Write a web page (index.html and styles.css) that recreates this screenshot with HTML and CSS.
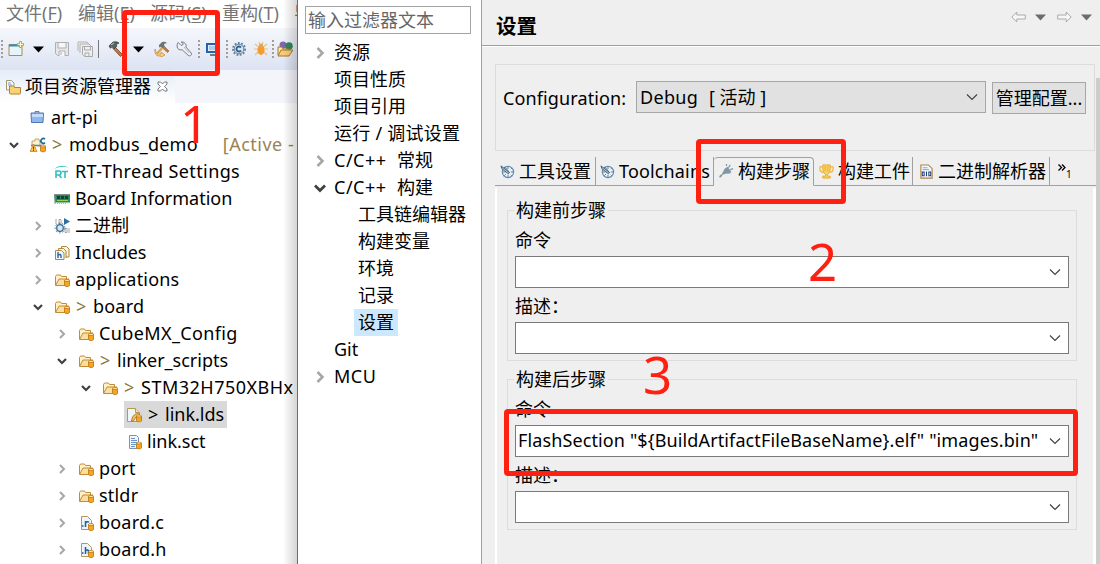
FILE: index.html
```html
<!DOCTYPE html>
<html lang="zh-CN">
<head>
<meta charset="utf-8">
<title>设置</title>
<link rel="stylesheet" href="styles.css">
</head>
<body>
<svg class="defs" aria-hidden="true">
  <symbol id="right" viewBox="0 0 16 16"><path d="M6 4l4 4-4 4" fill="none" stroke="#a6a6a6" stroke-width="2"/></symbol>
  <symbol id="down" viewBox="0 0 16 16"><path d="M4 6l4 4 4-4" fill="none" stroke="#404040" stroke-width="2.2"/></symbol>
  <symbol id="chev" viewBox="0 0 12 8"><path d="M1 1.5l5 5 5-5" fill="none" stroke="#444" stroke-width="1.2"/></symbol>
  <symbol id="tri" viewBox="0 0 11 7"><path d="M0 .5h11L5.500 6.500z" fill="currentColor"/></symbol>
  <symbol id="db" viewBox="0 0 6 8"><path d="M.5 1.500v5c0 1.300 5 1.300 5 0v-5" fill="#f6a623" stroke="#b9720d" stroke-width=".8"/><ellipse cx="3" cy="1.500" rx="2.500" ry="1.100" fill="#ffe39a" stroke="#b9720d" stroke-width=".7"/></symbol>
  <symbol id="folder" viewBox="0 0 16 16"><path d="M1.500 13V4.500l1-1.500h4l1 1.500h5V7" fill="#fff2c6" stroke="#c58a35"/><path d="M1.500 13.500L5 7h10l-3 6.500z" fill="#fbdfa0" stroke="#c58a35"/><use href="#db" x="10" y="7" width="6" height="8"/></symbol>
  <symbol id="proj" viewBox="0 0 16 16"><path d="M5 3V1.500h4V3" fill="#e8e6ee" stroke="#7b7997"/><path d="M1 3h12.500l-.5 9.500H1.500z" fill="#8fb9ee" stroke="#5474b3"/><path d="M2 4h11v3H2z" fill="#c3dcfa"/></symbol>
  <symbol id="cproj" viewBox="0 0 16 16"><path d="M2 8V4h3V2h4v2h1v5z" fill="#fff1cc" stroke="#c9a368"/><path d="M1 8.500h13" stroke="#5a82ba" stroke-width="1.500"/><path d="M15 2.200a2.400 2.400 0 1 0 0 3.500" fill="none" stroke="#176c9d" stroke-width="1.700"/><path d="M3.500 7L7 14.500H0z" fill="#ffc247" stroke="#d18513" stroke-width=".8"/><path d="M3.500 9.500v3M3.500 13v1" stroke="#6d4812"/><use href="#db" x="10" y="7.500" width="6" height="8"/></symbol>
  <symbol id="rt" viewBox="0 0 16 16"><path d="M0 5Q7-1 15 4Q8 1 0 5" fill="#35c5c6"/><path d="M2 14V7h3q2 0 2 2t-2 2H2M5 11l2.500 3M8 7.500h6M11 7.500V14" fill="none" stroke="#35bdbf" stroke-width="1.600"/></symbol>
  <symbol id="board" viewBox="0 0 16 16"><path d="M0 3.500h16v8H1z" fill="#26895a"/><path d="M0 3.500h16M1 3v10" stroke="#858f8b"/><path d="M3 5h3v3H3zm4 0h3v3H7zm4 0h3v3h-3z" fill="#173f33"/><path d="M3 9h11v1H3z" fill="#9dce55"/><path d="M3 12.500h9" stroke="#d5b13a" stroke-dasharray="1 1"/></symbol>
  <symbol id="bin" viewBox="0 0 16 16"><path d="M2 1v5M5 1.500h2v4H5zM11 10.500h2v4h-2zM15 10v5" fill="none" stroke="#a4a4a4"/><path d="M10 0l6 3.500L10 7z" fill="#2c6fa0"/><circle cx="6" cy="10" r="3.300" fill="#d8e8f2" stroke="#376b91" stroke-width="1.300"/><circle cx="6" cy="10" r="4.900" fill="none" stroke="#376b91" stroke-dasharray="1.500 2"/></symbol>
  <symbol id="inc" viewBox="0 0 16 16"><path d="M7.500 10V1.500h5L15 4v8h-3" fill="#fff7d9" stroke="#ad8740"/><path d="M4.500 10V3.500h5L12 6v7" fill="#fff7d9" stroke="#ad8740"/><path d="M1.500 5.500h6L10 8v6.500H1.500z" fill="#f2f6ff" stroke="#ad8740"/><path d="M4 7v6M4 10q3-1.500 3 1v2" fill="none" stroke="#28689d" stroke-width="1.400"/></symbol>
  <symbol id="lds" viewBox="0 0 16 16"><path d="M1.500 1.500h8l4 4v9h-12z" fill="#edf4fc" stroke="#b89953"/><path d="M9.500 1.500v4h4" fill="#f9e3a6" stroke="#b89953"/><path d="M5.500 14q0-5 4-7 2-1 4 0v1q-4 1-6 6z" fill="#f0bd62" stroke="#a96a18" stroke-width=".8"/><use href="#db" x="10" y="7.500" width="6" height="8"/></symbol>
  <symbol id="sct" viewBox="0 0 16 16"><path d="M3.500 1.500h7l2 2v11h-9z" fill="#f0f5ff" stroke="#8491a8"/><path d="M5 4.500h4M5 6.500h6M5 8.500h6M5 10.500h5M5 12.500h4" stroke="#6a93cc"/><use href="#db" x="10" y="7.500" width="6" height="8"/></symbol>
  <symbol id="cfile" viewBox="0 0 16 16"><path d="M3.500 1.500h6l4 4v9h-10z" fill="#eef4fd" stroke="#ad985d"/><path d="M4 11h1.500M7.500 6v6M7.500 8q1.500-1.800 3.500-.8" fill="none" stroke="#245b91" stroke-width="1.500"/><use href="#db" x="10" y="8" width="6" height="8"/></symbol>
  <symbol id="hfile" viewBox="0 0 16 16"><path d="M3.500 1.500h6l4 4v9h-10z" fill="#eef4fd" stroke="#ad985d"/><path d="M4 11h1.500M7.500 5v7M7.500 8.500q3-1.500 3 1V12" fill="none" stroke="#245b91" stroke-width="1.500"/><use href="#db" x="10" y="8" width="6" height="8"/></symbol>
  <symbol id="hammer" viewBox="0 0 16 16"><path d="M6.500 5.500l8 8-2 2-7.500-8z" fill="#bd7a45" stroke="#704223" stroke-width=".8"/><path d="M1 5l4-4q4-1 6 1L8 3.500l1 1.800-3 2.500-2-2-1.500 1.500z" fill="#596461" stroke="#303a38" stroke-width=".7"/><path d="M3 4l3-2" stroke="#bfc9c6"/></symbol>
  <symbol id="hammer2" viewBox="0 0 16 16"><path d="M1 8q1 6 6 5v-2l4 3-4 2v-1Q0 16 1 8" fill="#f9d57a" stroke="#c7923f" stroke-width=".8"/><path d="M10 5l5 5-1.500 1.500L8.500 7z" fill="#bd7a45" stroke="#915d34" stroke-width=".6"/><path d="M5 4l3-3q3-1 5 1l-3 1 .5 2L8 7.500 6 5.500 5 7z" fill="#687675"/><path d="M7.500 6L2 12l1.500 1.500L9 8z" fill="#d9a457"/></symbol>
  <symbol id="wrench" viewBox="0 0 16 16"><path d="M2 1l3 3 1.500-.5L7 2 5 .5q3-.5 4.500 2 .8 1.500.2 3l5.300 6q1 1.500-.5 2.500-1 1-2.500-.2L6 8.300Q2 9 1 5.500.3 3 2 1z" transform="translate(.2 .5)" fill="#f1f1f3" stroke="#777b87"/><path d="M8 6l5 6" stroke="#b5b7be"/></symbol>
  <symbol id="gauge" viewBox="0 0 16 16"><circle cx="8.500" cy="8.500" r="6" fill="#edf5fa" stroke="#6d8fae" stroke-width="1.300"/><path d="M8.500 2.500v3M8.500 11.500v3M3 8.500h3M11.500 8.500h3M4.500 12.500l2-2M11.500 5.500l1-1M11.500 11.500l1 1" stroke="#52789c"/><path d="M1 2l9 7-1 1.500L2 5zM5 3l5 6" fill="#bdcbd5" stroke="#3c5d78"/></symbol>
</svg>

<div class="window">
  <section class="ide">
    <nav class="menu"><span>文件(<u>F</u>)</span><span>编辑(<u>E</u>)</span><span>源码(<u>S</u>)</span><span>重构(<u>T</u>)</span><span>导</span></nav>
    <div class="toolbar">
      <i class="dots"></i>
      <svg viewBox="0 0 16 16"><path d="M1 3.500h13v11H1z" fill="#e7f4fc" stroke="#a88f47"/><path d="M1 4.500h11" stroke="#338bc1" stroke-width="2"/><path d="M12.500 0v7M9 3.500h7" stroke="#c9a32b" stroke-width="2.500"/><path d="M12.500 1v5M10 3.500h5" stroke="#fff6bd"/></svg>
      <svg class="caret"><use href="#tri"/></svg>
      <svg viewBox="0 0 16 16"><path d="M1.500 1.500h13v13h-11l-2-2z" fill="#e7e7ea" stroke="#b0b0b3"/><path d="M4 2v5h8V2M5 15v-5h6v5M7 11v3" fill="#f6f6f6" stroke="#b0b0b3"/></svg>
      <svg viewBox="0 0 16 16"><path d="M1 10V1h9l2 2M3 12V3h9l2 2" fill="#eee" stroke="#b0b0b3"/><path d="M5.500 5.500h10v10h-8l-2-2z" fill="#eee" stroke="#aaa"/><path d="M7.500 6v3h6V6M8 15v-3h4v3" fill="none" stroke="#aaa"/></svg>
      <i class="rule"></i>
      <svg><use href="#hammer"/></svg>
      <svg class="caret"><use href="#tri"/></svg>
      <svg><use href="#hammer2"/></svg>
      <svg><use href="#wrench"/></svg>
      <i class="dots"></i>
      <svg viewBox="0 0 16 16"><path d="M1 2h14v10H1z" fill="#2761a8"/><path d="M3 4h10v6H3z" fill="#dfefff"/><path d="M4 6h6M4 8h8" stroke="#75a9df"/><path d="M5 14h7" stroke="#777" stroke-width="2"/></svg>
      <i class="dots"></i>
      <svg viewBox="0 0 16 16"><circle cx="8" cy="8" r="6" fill="none" stroke="#6c7f8e" stroke-width="2" stroke-dasharray="1.800 1.500"/><circle cx="8" cy="8" r="4.800" fill="#d7e6f3" stroke="#63839d"/><path d="M10 6.500a2.500 2.500 0 1 0 0 3" fill="none" stroke="#225d98" stroke-width="1.800"/></svg>
      <svg viewBox="0 0 16 16"><path d="M2 3l4 3M14 3l-4 3M1 8h14M2 14l4-4M14 14l-4-4M6 1l1 3M10 1L9 4" stroke="#e8c084" stroke-width="1.200"/><ellipse cx="8" cy="9" rx="3.500" ry="5" fill="#f69c2f"/><circle cx="8" cy="4.500" r="2" fill="#dca756"/></svg>
      <i class="dots"></i>
      <svg viewBox="0 0 16 16"><circle cx="6" cy="4" r="3.500" fill="#7f67ae"/><circle cx="12" cy="5" r="3.800" fill="#34875b"/><path d="M1 14V6h4l1 2h6v6z" fill="#ffedb0" stroke="#aa752f"/><path d="M1 15l3-6h12l-4 6z" fill="#f7ce73" stroke="#aa752f"/></svg>
    </div>
    <div class="tabstrip"><div class="viewtab">
      <svg viewBox="0 0 16 16"><path d="M1.500 11V1.500h5L9 4v7z" fill="#f4f8ff" stroke="#a5966e"/><path d="M3 4h3M3 6h4" stroke="#6ea0d0"/><path d="M4.500 14V7h4l1 1.500h6V14q0 1-1 1h-9q-1 0-1-1z" fill="#f9d176" stroke="#b9822c"/></svg>
      <span>项目资源管理器</span>
      <svg class="close" viewBox="0 0 11 11"><path d="M1 1h2.500l2 2 2-2H10v2L7.700 5.500 10 8v2H7.500l-2-2-2 2H1V8l2.300-2.500L1 3z" fill="#fff" stroke="#777"/></svg>
    </div></div>
    <div class="tree">
      <div class="row l0"><i class="tw"></i><svg><use href="#proj"/></svg><span>art-pi</span></div>
      <div class="row l0"><svg class="tw"><use href="#down"/></svg><svg><use href="#cproj"/></svg><b>&gt;</b><span>modbus_demo</span><em>[Active -</em></div>
      <div class="row l1"><i class="tw"></i><svg><use href="#rt"/></svg><span class="wide">RT-Thread Settings</span></div>
      <div class="row l1"><i class="tw"></i><svg><use href="#board"/></svg><span class="tight">Board Information</span></div>
      <div class="row l1"><svg class="tw"><use href="#right"/></svg><svg><use href="#bin"/></svg><span class="tight">二进制</span></div>
      <div class="row l1"><svg class="tw"><use href="#right"/></svg><svg><use href="#inc"/></svg><span class="tight">Includes</span></div>
      <div class="row l1"><svg class="tw"><use href="#right"/></svg><svg><use href="#folder"/></svg><span>applications</span></div>
      <div class="row l1"><svg class="tw"><use href="#down"/></svg><svg><use href="#folder"/></svg><b>&gt;</b><span>board</span></div>
      <div class="row l2"><svg class="tw"><use href="#right"/></svg><svg><use href="#folder"/></svg><span class="wide">CubeMX_Config</span></div>
      <div class="row l2"><svg class="tw"><use href="#down"/></svg><svg><use href="#folder"/></svg><b>&gt;</b><span class="tight">linker_scripts</span></div>
      <div class="row l3"><svg class="tw"><use href="#down"/></svg><svg><use href="#folder"/></svg><b>&gt;</b><span class="wider">STM32H750XBHx</span></div>
      <div class="row l4 chosen"><div class="pick"><svg><use href="#lds"/></svg><b>&gt;</b><span class="tight">link.lds</span></div></div>
      <div class="row l4"><i class="tw"></i><svg><use href="#sct"/></svg><span class="tight">link.sct</span></div>
      <div class="row l2"><svg class="tw"><use href="#right"/></svg><svg><use href="#folder"/></svg><span>port</span></div>
      <div class="row l2"><svg class="tw"><use href="#right"/></svg><svg><use href="#folder"/></svg><span>stldr</span></div>
      <div class="row l2"><svg class="tw"><use href="#right"/></svg><svg><use href="#cfile"/></svg><span>board.c</span></div>
      <div class="row l2"><svg class="tw"><use href="#right"/></svg><svg><use href="#hfile"/></svg><span>board.h</span></div>
    </div>
    <div class="shade"></div>
  </section>

  <aside class="pages">
    <div class="filter">输入过滤器文本</div>
    <div class="item"><svg><use href="#right"/></svg><span>资源</span></div>
    <div class="item"><i></i><span>项目性质</span></div>
    <div class="item"><i></i><span>项目引用</span></div>
    <div class="item"><i></i><span class="run">运行 / 调试设置</span></div>
    <div class="item"><svg><use href="#right"/></svg><span class="cpp">C/C++ </span><span>常规</span></div>
    <div class="item"><svg><use href="#down"/></svg><span class="cpp">C/C++ </span><span>构建</span></div>
    <div class="item sub"><span>工具链编辑器</span></div>
    <div class="item sub"><span>构建变量</span></div>
    <div class="item sub"><span>环境</span></div>
    <div class="item sub"><span>记录</span></div>
    <div class="item sub"><span class="on">设置</span></div>
    <div class="item"><i></i><span>Git</span></div>
    <div class="item"><svg><use href="#right"/></svg><span class="wider">MCU</span></div>
  </aside>

  <main class="settings">
    <header><h1>设置</h1>
      <div class="history">
        <svg class="arrow" viewBox="0 0 15 12"><path d="M.8 6l5-5v3h8.500v4H5.800v3z" fill="#f7f7f7" stroke="#aaa"/></svg>
        <svg class="caret"><use href="#tri"/></svg>
        <svg class="arrow" viewBox="0 0 15 12"><path d="M14.200 6l-5-5v3H.7v4h8.500v3z" fill="#f7f7f7" stroke="#aaa"/></svg>
        <svg class="caret"><use href="#tri"/></svg>
      </div>
    </header>
    <div class="scroll">
      <div class="body">
        <div class="config">
          <label>Configuration:</label>
          <div class="select"><span class="dbg">Debug</span><span>[ 活动 ]</span><svg class="chev"><use href="#chev"/></svg></div>
          <div class="button">管理配置...</div>
        </div>
        <div class="tabs">
          <div class="tab t1"><svg><use href="#gauge"/></svg>工具设置</div>
          <div class="tab t2"><svg><use href="#gauge"/></svg><span>Toolchains</span></div>
          <div class="tab t3"><svg viewBox="0 0 16 16"><path d="M0 14l1-2 2-1 3-6 3-2 4 5-1 2-5 .5-3 1-2 3z" fill="#8097a8"/><path d="M8 0v2M12 1l-2 3M15 5l-3 1" stroke="#8097a8" stroke-width="1.300"/></svg>构建步骤</div>
          <div class="tab t4"><svg viewBox="0 0 16 16"><path d="M4 1h8v4q0 5-3 6v2h3v2H4v-2h3v-2Q4 10 4 5z" fill="#fbd15d" stroke="#e9ab2a"/><path d="M4 3H1v3q.5 3 4 3M12 3h3v3q-.5 3-4 3M6.500 2v6M9.500 2v6" fill="none" stroke="#edb33b" stroke-width="1.200"/></svg>构建工件</div>
          <div class="tab t5"><svg viewBox="0 0 16 16"><path d="M2 1h8l4 4v10H2z" fill="#f4f8ff" stroke="#ad8440" stroke-width="1.200"/><path d="M4 4h5M4 6h7" stroke="#7ba4d2"/><path d="M3.500 8.500h2v4h-2zM8 8v5M10.500 8.500h2v4h-2z" fill="none" stroke="#203f77" stroke-width="1.100"/></svg>二进制解析器</div>
          <div class="more"><svg viewBox="0 0 8 7"><path d="M.5.500l3 3-3 3M4 .5l3 3-3 3" fill="none" stroke="#000" stroke-width="1.300"/></svg><small>1</small></div>
        </div>
        <div class="panel">
          <section class="group"><h2>构建前步骤</h2>
            <label>命令</label><div class="combo"><svg class="chev"><use href="#chev"/></svg></div>
            <label>描述：</label><div class="combo"><svg class="chev"><use href="#chev"/></svg></div>
          </section>
          <section class="group"><h2>构建后步骤</h2>
            <label>命令</label><div class="combo"><span class="command">FlashSection "${BuildArtifactFileBaseName}.elf" "images.bin"</span><svg class="chev"><use href="#chev"/></svg></div>
            <label>描述：</label><div class="combo"><svg class="chev"><use href="#chev"/></svg></div>
          </section>
        </div>
      </div>
      <div class="bar"></div>
    </div>
  </main>

  <div class="mark m1"></div><div class="mark m2"></div><div class="mark m3"></div>
  <span class="num n1">1</span><span class="num n2">2</span><span class="num n3">3</span>
</div>
</body>
</html>
```

FILE: styles.css
```css
* { box-sizing: border-box; }
body { margin: 0; overflow: hidden; font: 400 18px/27px "Noto Sans", "Noto Sans CJK SC", sans-serif; color: #000; }
.defs { position: absolute; width: 0; height: 0; }
svg { width: 16px; height: 16px; flex: none; display: block; }
.window { position: relative; width: 1100px; height: 564px; display: grid; grid-template-columns: 297px 185px 618px; overflow: hidden; white-space: nowrap; }

/* workbench */
.ide { position: relative; overflow: hidden; background: #fff; }
.menu { display: flex; height: 28px; padding-left: 6px; line-height: 27px; color: #757575; }
.menu span { width: 72px; flex: none; }
.menu u { text-underline-offset: 2px; text-decoration-thickness: 1px; }
.toolbar { height: 42px; display: grid; align-items: center; background: linear-gradient(#f5f7fc, #dde3f3); padding-left: 1px;
  grid-template-columns: 7px 25px 21px 23px 21px 10px 25px 21px 22px 22px 7px 21px 5px 22px 19px 5px 18px; }
.caret { width: 11px; height: 7px; color: #000; }
.dots { width: 2px; height: 18px; background: repeating-linear-gradient(#a69c92 0 2px, transparent 2px 4px); }
.rule { width: 1px; height: 18px; background: #777; }
.tabstrip { height: 33px; background: #f4f4fb; }
.viewtab { width: 175px; height: 33px; display: flex; align-items: center; padding-left: 5px; gap: 4px; background: linear-gradient(#e5edf7, #fff); border-radius: 0 6px 0 0; }
.close { width: 11px; height: 11px; margin-left: 2px; }
.row { height: 27px; display: flex; align-items: center; letter-spacing: .2px; }
.row svg { margin-right: 5px; }
.row .tw { width: 16px; height: 16px; margin-right: 8px; flex: none; }
.row b { font-weight: inherit; width: 18px; padding-left: 1px; color: #8b7336; }
.row em { font-style: normal; color: #9a8353; margin-left: 25px; letter-spacing: .5px; }
.row .tight { letter-spacing: 0; }
.row .wide { letter-spacing: .38px; }
.wider { letter-spacing: .5px; }
.tree { padding-top: 1px; }
.l0 { padding-left: 6px; }
.l1 { padding-left: 30px; }
.l2 { padding-left: 54px; }
.l3 { padding-left: 78px; }
.l4 { padding-left: 102px; }
.l4.chosen { padding-left: 124px; }
.pick { display: flex; align-items: center; height: 27px; width: 103px; padding-left: 2px; background: #d9d9d9; }
.pick b { color: #000; }
.shade { position: absolute; right: 0; top: 0; width: 14px; height: 564px; background: linear-gradient(90deg, transparent, rgba(0,0,0,.17)); }

/* page list */
.pages { background: #fff; border-left: 1px solid #6c6c6c; border-right: 1px solid #a0a0a0; }
.filter { margin: 6px 0 5px 7px; width: 166px; height: 28px; border: 1px solid #a3a3a3; padding-left: 2px; line-height: 26px; color: #666; }
.item { height: 27px; display: flex; align-items: center; padding-left: 12px; }
.item svg, .item i { width: 20px; height: 20px; margin-right: 4px; flex: none; }
.item.sub { padding-left: 60px; }
.on { background: #cce8ff; margin-left: -4px; padding: 0 4px; }
.cpp { width: 63px; letter-spacing: .5px; }
.run { letter-spacing: .25px; }

/* settings page */
.settings { background: #efefef; }
header { height: 47px; display: flex; justify-content: space-between; padding: 6px 8px 0 14px; border-bottom: 1px solid #fff; box-shadow: inset 0 -1px #a0a0a0; }
h1 { margin: 0; font-size: 20.500px; line-height: 40px; font-weight: 700; }
.history { display: flex; align-items: center; height: 22px; gap: 9px; }
.history .arrow { width: 15px; height: 12px; }
.history .arrow:first-child { margin-left: -4px; }
.history .caret { color: #6c6c6c; }
.history .arrow + .caret { margin-right: 2px; }
.history .caret:last-child { margin-right: 0; }
.scroll { display: grid; grid-template-columns: 1fr 4px; height: 517px; }
.bar { background: #cdcdcd; margin-top: 31px; }
.body { padding: 17px 0 0 13px; }
.config { width: 600px; height: 87px; border: 1px solid #dcdcdc; display: flex; align-items: flex-start; padding: 16px 0 0 7px; }
.config label { width: 133px; line-height: 34px; letter-spacing: .12px; }
.select { width: 350px; height: 32px; background: #e1e1e1; border: 1px solid #a6a6a6; display: flex; align-items: center; padding: 0 7px 0 3px; }
.dbg { width: 69px; letter-spacing: .3px; }
.chev { width: 12px; height: 8px; margin-left: auto; }
.button { width: 94px; height: 32px; margin: 1px 0 0 6px; background: #e1e1e1; border: 1px solid #a6a6a6; line-height: 30px; text-align: center; }
.tabs { display: flex; height: 29px; margin-top: 6px; }
.tab { display: flex; align-items: center; border-bottom: 1px solid #a0a0a0; border-right: 1px solid #a0a0a0; padding-left: 5px; }
.tab svg { width: 15px; height: 15px; margin-right: 4px; }
.t1 { width: 101px; }
.t2 { width: 118px; letter-spacing: .15px; padding-left: 4px; }
.t3 { width: 100px; border-bottom-color: transparent; border-top: 1px solid #a0a0a0; border-radius: 4px 4px 0 0; }
.t4 { width: 99px; }
.t5 { width: 137px; padding-left: 6px; }
.more { flex: 1; border-bottom: 1px solid #a0a0a0; display: flex; padding: 7px 0 0 8px; }
.more svg { width: 8px; height: 7px; }
.more small { font-size: 10px; line-height: 20px; }
.panel { height: 376px; margin-top: 2px; border-left: 2px solid #fff; border-right: 3px solid #fff; padding: 22px 16px 0 10px; }
.group { height: 151px; margin-bottom: 18px; border: 1px solid #dcdcdc; padding: 0 7px; }
.group h2 { width: 94px; height: 27px; margin: -14px 0 3px -1px; padding-left: 2px; background: #efefef; font-size: 18px; line-height: 27px; font-weight: inherit; }
.group label { display: block; height: 27px; margin-bottom: 2px; line-height: 26px; }
.combo { height: 32px; border: 1px solid #7a7a7a; background: #fff; display: flex; align-items: center; padding: 0 7px 0 2px; margin-bottom: 5px; }
.command { letter-spacing: .12px; line-height: 26px; padding-bottom: 2px; }

/* callouts */
.mark { position: absolute; border: 5px solid #ff2012; border-radius: 4px; }
.m1 { left: 122px; top: 10px; width: 98px; height: 66px; }
.m2 { left: 696px; top: 139px; width: 150px; height: 65px; }
.m3 { left: 504px; top: 409px; width: 574px; height: 67px; }
.num { position: absolute; color: #ff2012; font-size: 51px; line-height: 60px; font-weight: 400; }
.n1 { left: 180px; top: 93px; }
.n2 { left: 808px; top: 231px; }
.n3 { left: 643px; top: 344px; }
```
